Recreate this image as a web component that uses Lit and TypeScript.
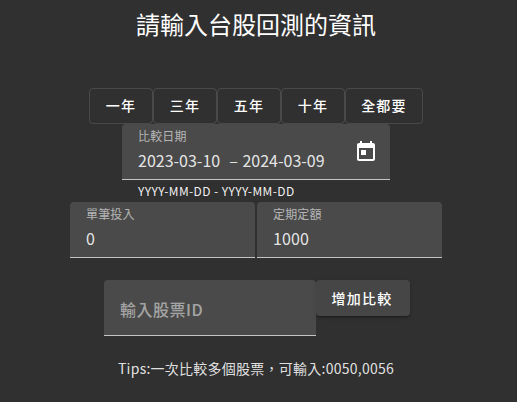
import { LitElement, html, css } from "lit";
import { customElement } from "lit/decorators.js";

@customElement("app-root")
export class AppRoot extends LitElement {
  static styles = css`
    :host {
      display: block;
      width: 517px;
      height: 402px;
      background: #303030;
      color: #fff;
      font-family: "Noto Sans CJK TC", "Noto Sans", sans-serif;
      overflow: hidden;
    }
    .page { width: 512px; display: flex; flex-direction: column; align-items: center; }
    h1 { margin: 0; height: 88px; padding-top: 6px; box-sizing: border-box; font-size: 24px; line-height: 36px; font-weight: 400; letter-spacing: 0; }
    .group { display: flex; height: 36px; }
    .group button {
      height: 36px; box-sizing: border-box; margin: 0; padding: 0 0 2px;
      background: transparent; color: #fff;
      border: 1px solid rgba(255,255,255,0.12); border-radius: 4px;
      font: 500 14px/1 "Noto Sans CJK TC", sans-serif; letter-spacing: 1.25px;
      width: 64px;
    }
    .group button.wide { width: 78px; }
    .field {
      box-sizing: border-box; height: 56px; background: rgba(255,255,255,0.13);
      border-bottom: 1px solid #c4c4c4; border-radius: 4px 4px 0 0;
      padding: 5px 16px 0; position: relative;
    }
    .label { font-size: 12px; line-height: 14px; color: rgba(255,255,255,0.6); letter-spacing: 0.15px; }
    .value { font-size: 16px; line-height: 24px; margin-top: 5px; color: rgba(255,255,255,0.87); white-space: pre; letter-spacing: 0.15px; }
    .date .value { letter-spacing: 0; word-spacing: 1px; }
    .date { width: 268px; }
    .icon { position: absolute; right: 12px; top: 16px; width: 24px; height: 24px; fill: #fff; }
    .hint { width: 236px; height: 22px; font-size: 12px; line-height: 22px; color: rgba(255,255,255,0.95); letter-spacing: 0.4px; }
    .row { display: flex; gap: 2px; }
    .row .field { width: 185px; }
    .row2 { display: flex; margin-top: 22px; margin-left: 2px; align-items: flex-start; }
    .id { width: 212px; padding-top: 17px; font-size: 16px; line-height: 24px; font-weight: 500; color: rgba(255,255,255,0.5); letter-spacing: 0.5px; }
    .add {
      width: 94px; height: 36px; border: 0; border-radius: 4px; margin: 0; padding: 0 2px 0 0;
      background: rgba(255,255,255,0.11); color: #fff;
      font: 500 14px/1 "Noto Sans CJK TC", sans-serif; letter-spacing: 1.25px;
      box-shadow: 0 3px 1px -2px rgba(0,0,0,.2), 0 2px 2px 0 rgba(0,0,0,.14), 0 1px 5px 0 rgba(0,0,0,.12);
    }
    .tips { margin-top: 20px; font-size: 14px; line-height: 24px; color: rgba(255,255,255,0.87); letter-spacing: 0.25px; }
  `;

  render() {
    return html`<div class="page">
      <h1>請輸入台股回測的資訊</h1>
      <div class="group">
        <button>一年</button><button>三年</button><button>五年</button><button>十年</button><button class="wide">全都要</button>
      </div>
      <div class="field date">
        <div class="label">比較日期</div>
        <div class="value">2023-03-10  – 2024-03-09</div>
        <svg class="icon" viewBox="0 0 24 24"><path d="M19 3h-1V1h-2v2H8V1H6v2H5c-1.1 0-2 .9-2 2v14c0 1.1.9 2 2 2h14c1.1 0 2-.9 2-2V5c0-1.1-.9-2-2-2zm0 16H5V8h14v11zM7 10h5v5H7z"/></svg>
      </div>
      <div class="hint">YYYY-MM-DD - YYYY-MM-DD</div>
      <div class="row">
        <div class="field"><div class="label">單筆投入</div><div class="value">0</div></div>
        <div class="field"><div class="label">定期定額</div><div class="value">1000</div></div>
      </div>
      <div class="row2">
        <div class="field id">輸入股票ID</div>
        <button class="add">增加比較</button>
      </div>
      <div class="tips">Tips:一次比較多個股票，可輸入:0050,0056</div>
    </div>`;
  }
}
